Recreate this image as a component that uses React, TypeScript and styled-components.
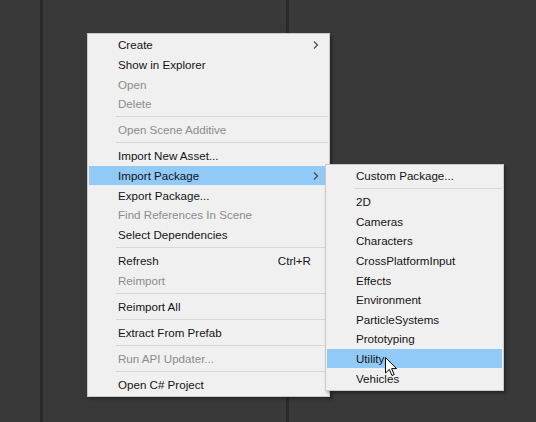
import React from "react";
import styled, { createGlobalStyle } from "styled-components";

const GlobalStyle = createGlobalStyle`
    html, body {
        margin: 0;
        padding: 0;
        background: #393939;
        overflow: hidden;
    }
    #root {
        height: 100vh;
    }
`

const Workspace = styled.div`
    position: relative;
    display: flex;
    flex-direction: row;
    height: 100%;
    background: #393939;
    font-family: "Liberation Sans", Arial, sans-serif;
`

const Panel = styled.div<{ $width?: number }>`
    flex: ${(p) => (p.$width ? `0 0 ${p.$width}px` : "1")};
    background: #393939;
`

const Divider = styled.div`
    flex: 0 0 3px;
    background: #2a2a2a;
`

const Menu = styled.div<{ $left: number; $top: number; $width: number }>`
    position: absolute;
    left: ${(p) => p.$left}px;
    top: ${(p) => p.$top}px;
    width: ${(p) => p.$width}px;
    box-sizing: border-box;
    display: flex;
    flex-direction: column;
    padding: 1px 1px 2px 1px;
    background: #f0f0f0;
    border: 1px solid #c9c9c9;
    box-shadow: 2px 2px 3px rgba(0, 0, 0, 0.35);
`

const Item = styled.div<{ $disabled?: boolean; $active?: boolean; $h: number }>`
    display: flex;
    align-items: center;
    height: ${(p) => p.$h}px;
    padding: 0 9px 0 29px;
    font-size: 11.6px;
    color: ${(p) => (p.$disabled ? "#8c8c8c" : "#141414")};
    background: ${(p) => (p.$active ? "#91c9f7" : "transparent")};
    white-space: nowrap;
`

const Label = styled.span`
    flex: 1;
`

const Shortcut = styled.span`
    margin-right: 8px;
`

const Separator = styled.div`
    height: 1px;
    margin: 2.65px 0 2.65px 27px;
    background: #d7d7d7;
`

const Cursor = styled.svg`
    position: absolute;
    left: 385px;
    top: 357px;
`

function Chevron() {
    return (
        <svg width="6" height="8" viewBox="0 0 6 8">
            <path d="M1 0.5 L4.5 4 L1 7.5" fill="none" stroke="#4a4a4a" strokeWidth="1.2" />
        </svg>
    )
}

type Entry = { label?: string; disabled?: boolean; active?: boolean; sub?: boolean; shortcut?: string; sep?: boolean }

const mainItems: Entry[] = [
    { label: "Create", sub: true },
    { label: "Show in Explorer" },
    { label: "Open", disabled: true },
    { label: "Delete", disabled: true },
    { sep: true },
    { label: "Open Scene Additive", disabled: true },
    { sep: true },
    { label: "Import New Asset..." },
    { label: "Import Package", sub: true, active: true },
    { label: "Export Package..." },
    { label: "Find References In Scene", disabled: true },
    { label: "Select Dependencies" },
    { sep: true },
    { label: "Refresh", shortcut: "Ctrl+R" },
    { label: "Reimport", disabled: true },
    { sep: true },
    { label: "Reimport All" },
    { sep: true },
    { label: "Extract From Prefab" },
    { sep: true },
    { label: "Run API Updater...", disabled: true },
    { sep: true },
    { label: "Open C# Project" },
]

const subItems: Entry[] = [
    { label: "Custom Package..." },
    { sep: true },
    { label: "2D" },
    { label: "Cameras" },
    { label: "Characters" },
    { label: "CrossPlatformInput" },
    { label: "Effects" },
    { label: "Environment" },
    { label: "ParticleSystems" },
    { label: "Prototyping" },
    { label: "Utility", active: true },
    { label: "Vehicles" },
]

function MenuList({ items, rowHeight }: { items: Entry[]; rowHeight: number }) {
    return (
        <>
            {items.map((it, i) =>
                it.sep ? (
                    <Separator key={i} />
                ) : (
                    <Item key={i} $h={rowHeight} $disabled={it.disabled} $active={it.active}>
                        <Label>{it.label}</Label>
                        {it.shortcut && <Shortcut>{it.shortcut}</Shortcut>}
                        {it.sub && <Chevron />}
                    </Item>
                )
            )}
        </>
    )
}

export default function App() {
    return (
        <>
            <GlobalStyle />
            <Workspace>
                <Panel $width={40} />
                <Divider />
                <Panel $width={243} />
                <Divider />
                <Panel />

                <Menu $left={87} $top={33} $width={243}>
                    <MenuList items={mainItems} rowHeight={19.7} />
                </Menu>
                <Menu $left={325} $top={164} $width={179}>
                    <MenuList items={subItems} rowHeight={19.6} />
                </Menu>

                <Cursor width="13" height="20" viewBox="0 0 13 20">
                    <path d="M0.5 0.5 L0.5 16 L4.3 12.4 L7 18.5 L9.2 17.5 L6.6 11.6 L11.5 11.6 Z" fill="#ffffff" stroke="#000000" strokeWidth="1" strokeLinejoin="round" />
                </Cursor>
            </Workspace>
        </>
    )
}
